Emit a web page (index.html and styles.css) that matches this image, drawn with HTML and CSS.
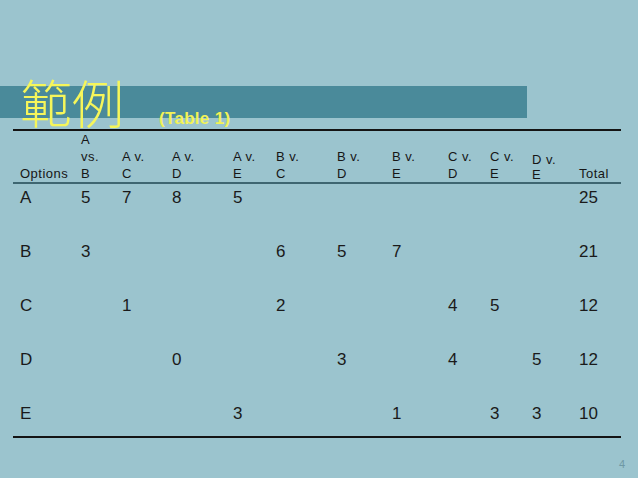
FILE: index.html
```html
<!DOCTYPE html>
<html lang="zh-Hant">
<head>
<meta charset="utf-8">
<title>範例 (Table 1)</title>
<link rel="stylesheet" href="styles.css">
</head>
<body>
<div class="slide">
  <div class="band"></div>
  <h1 class="title"><span class="title-main">範例</span><span class="title-sub">(Table 1)</span></h1>
  <table class="grid">
    <colgroup>
      <col class="c-opt"><col class="c1"><col class="c2"><col class="c3"><col class="c4"><col class="c5"><col class="c6"><col class="c7"><col class="c8"><col class="c9"><col class="c10"><col class="c-tot">
    </colgroup>
    <thead>
      <tr>
        <th>Options</th>
        <th>A<br>vs.<br>B</th>
        <th>A v.<br>C</th>
        <th>A v.<br>D</th>
        <th>A v.<br>E</th>
        <th>B v.<br>C</th>
        <th>B v.<br>D</th>
        <th>B v.<br>E</th>
        <th>C v.<br>D</th>
        <th>C v.<br>E</th>
        <th class="low">D v.<br>E</th>
        <th>Total</th>
      </tr>
    </thead>
    <tbody>
      <tr><td>A</td><td>5</td><td>7</td><td>8</td><td>5</td><td></td><td></td><td></td><td></td><td></td><td></td><td>25</td></tr>
      <tr><td>B</td><td>3</td><td></td><td></td><td></td><td>6</td><td>5</td><td>7</td><td></td><td></td><td></td><td>21</td></tr>
      <tr><td>C</td><td></td><td>1</td><td></td><td></td><td>2</td><td></td><td></td><td>4</td><td>5</td><td></td><td>12</td></tr>
      <tr><td>D</td><td></td><td></td><td>0</td><td></td><td></td><td>3</td><td></td><td>4</td><td></td><td>5</td><td>12</td></tr>
      <tr><td>E</td><td></td><td></td><td></td><td>3</td><td></td><td></td><td>1</td><td></td><td>3</td><td>3</td><td>10</td></tr>
    </tbody>
  </table>
  <div class="page-num">4</div>
</div>
</body>
</html>
```

FILE: styles.css
```css
html, body {
  margin: 0;
  padding: 0;
}

body {
  background: #9bc4ce;
  font-family: "Liberation Sans", Arial, sans-serif;
  color: #1a1a1a;
}

.slide {
  position: relative;
  width: 638px;
  height: 478px;
  overflow: hidden;
  padding-top: 76px;
  box-sizing: border-box;
}

.band {
  position: absolute;
  left: 0;
  top: 86px;
  width: 527px;
  height: 32px;
  background: #4a8a9a;
}

.title {
  position: relative;
  margin: 0;
  height: 52px;
  padding-left: 20px;
  display: flex;
  align-items: baseline;
  font-weight: normal;
  line-height: 52px;
  color: #f6f65a;
}

.title-main {
  font-family: "Noto Sans CJK TC", "Noto Sans CJK SC", sans-serif;
  font-size: 52px;
  font-weight: 300;
}

.title-sub {
  font-family: "Liberation Sans", Arial, sans-serif;
  font-size: 17px;
  font-weight: bold;
  letter-spacing: 0.3px;
  line-height: 1;
  margin-left: 35px;
  color: #f2f256;
}

.grid {
  margin: 1px 0 0 13px;
  width: 608px;
  table-layout: fixed;
  border-collapse: separate;
  border-spacing: 0;
  border-top: 2px solid #141414;
}

.c-opt { width: 61px; }
.c1 { width: 41px; }
.c2 { width: 50px; }
.c3 { width: 61px; }
.c4 { width: 43px; }
.c5 { width: 61px; }
.c6 { width: 55px; }
.c7 { width: 56px; }
.c8 { width: 42px; }
.c9 { width: 42px; }
.c10 { width: 47px; }
.c-tot { width: 49px; }

.grid thead tr {
  height: 53px;
}

.grid th {
  padding: 0 0 0 7px;
  text-align: left;
  vertical-align: bottom;
  font-weight: normal;
  font-size: 13px;
  letter-spacing: 0.5px;
  line-height: 17px;
  white-space: nowrap;
  border-bottom: 2px solid #3e6671;
  color: #161616;
}

.grid th.low {
  line-height: 15px;
}

.grid tbody tr {
  height: 54px;
}

.grid tbody tr:last-child {
  height: 38px;
}

.grid td {
  padding: 4px 0 0 7px;
  vertical-align: top;
  font-size: 17px;
  line-height: 20px;
  white-space: nowrap;
}

.grid tbody tr:last-child td {
  border-bottom: 2px solid #141414;
}

.page-num {
  margin-top: 19px;
  padding-right: 13px;
  text-align: right;
  font-size: 11px;
  line-height: 14px;
  color: #6f98a4;
}
```
